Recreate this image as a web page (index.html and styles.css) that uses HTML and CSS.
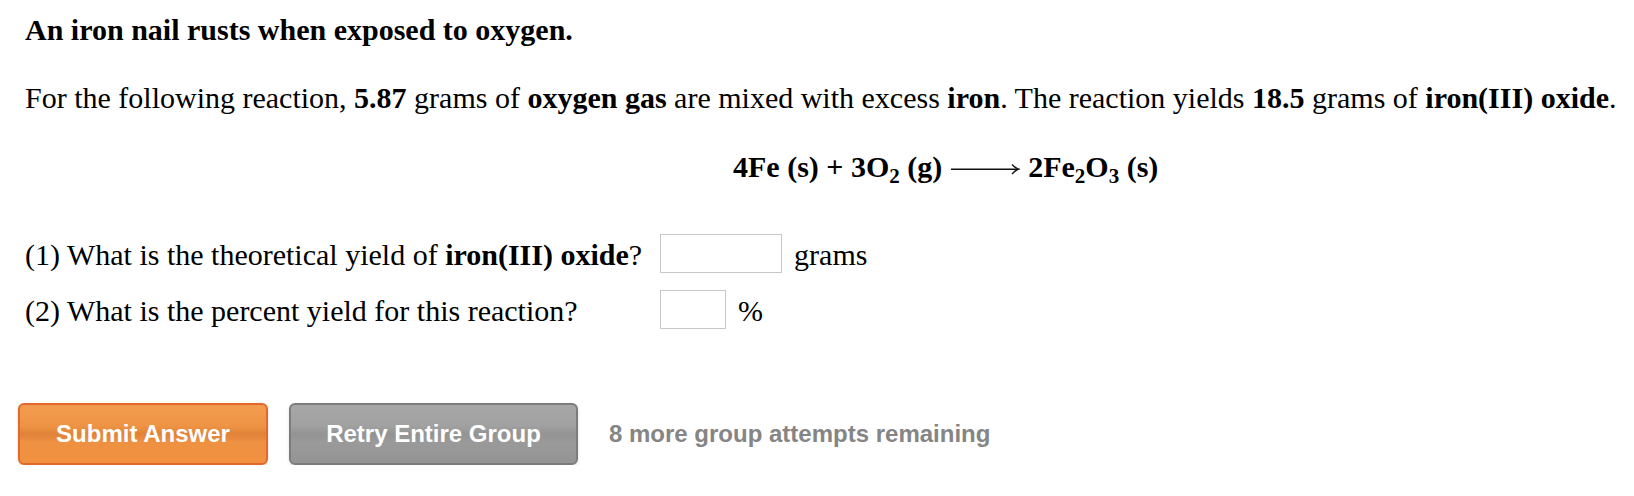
FILE: index.html
```html
<!DOCTYPE html>
<html>
<head>
<meta charset="utf-8">
<link rel="stylesheet" href="styles.css">
</head>
<body>
<div class="page">
  <div class="title">An iron nail rusts when exposed to oxygen.</div>
  <div class="para">For the following reaction, <b>5.87</b> grams of <b>oxygen gas</b> are mixed with excess <b>iron</b>. The reaction yields <b>18.5</b> grams of <b>iron(III) oxide</b>.</div>
  <div class="eq">4Fe (s) + 3O<span class="sub">2</span> (g) <svg class="arrow" width="70" height="20" viewBox="0 0 70 20"><path d="M1 10.2 H68" stroke="#111" stroke-width="1.5" fill="none"/><path d="M62 5.5 Q65 9 69 10.2 Q65 11.4 62 15" stroke="#111" stroke-width="1.3" fill="none"/></svg> 2Fe<span class="sub">2</span>O<span class="sub">3</span> (s)</div>
  <div class="questions">
    <div class="q">(1) What is the theoretical yield of <b>iron(III) oxide</b>?</div>
    <div class="ans"><input class="box wide" type="text"><span class="unit">grams</span></div>
    <div class="q">(2) What is the percent yield for this reaction?</div>
    <div class="ans"><input class="box narrow" type="text"><span class="unit">%</span></div>
  </div>
  <div class="actions">
    <button class="btn submit">Submit Answer</button>
    <button class="btn retry">Retry Entire Group</button>
    <span class="remaining">8 more group attempts remaining</span>
  </div>
</div>
</body>
</html>
```

FILE: styles.css
```css
html, body {
  margin: 0;
  padding: 0;
  background: #fff;
}
.page {
  padding: 13px 0 0 25px;
  font-family: "Liberation Serif", "Times New Roman", serif;
  font-size: 30px;
  color: #000;
}
.title {
  font-weight: bold;
  line-height: 34px;
}
.para {
  margin-top: 34px;
  line-height: 34px;
  white-space: nowrap;
}
.eq {
  margin-top: 35px;
  padding-left: 708px;
  line-height: 34px;
  height: 34px;
  font-weight: bold;
  white-space: nowrap;
}
.sub {
  font-size: 21px;
  line-height: 0;
  vertical-align: -6px;
}
.arrow {
  vertical-align: -2px;
  margin: 0 1px 0 0;
}
.questions {
  margin-top: 50px;
  display: grid;
  grid-template-columns: max-content max-content;
  grid-auto-rows: 39px;
  column-gap: 18px;
  row-gap: 17px;
  align-items: center;
}
.q {
  line-height: 34px;
  padding-top: 3px;
}
.ans {
  display: flex;
  align-items: center;
  gap: 12px;
}
.box {
  box-sizing: border-box;
  height: 39px;
  border: 1px solid #c8c8c8;
  margin: 0;
  padding: 0;
  background: #fff;
}
.wide { width: 122px; }
.narrow { width: 66px; }
.unit {
  line-height: 34px;
  padding-top: 3px;
}
.actions {
  margin-top: 74px;
  margin-left: -7px;
  display: flex;
  align-items: center;
  gap: 21px;
  font-family: "Liberation Sans", Arial, sans-serif;
}
.btn {
  box-sizing: border-box;
  height: 62px;
  padding: 0;
  border-radius: 6px;
  font-family: "Liberation Sans", Arial, sans-serif;
  font-weight: bold;
  font-size: 24px;
  color: #fff;
  white-space: nowrap;
  text-align: center;
  box-shadow: 0 1px 3px rgba(0,0,0,0.15);
}
.submit {
  width: 250px;
  border: 2px solid #e2692b;
  background: linear-gradient(to bottom, #f29b4f 0%, #ef9445 36%, #e08238 50%, #ee9142 64%, #f0913f 100%);
}
.retry {
  width: 289px;
  border: 2px solid #7c7c7c;
  background: linear-gradient(to bottom, #a7a7a7 0%, #a1a1a1 36%, #939393 50%, #9a9a9a 64%, #949494 100%);
}
.remaining {
  margin-left: 10px;
  font-weight: bold;
  font-size: 24px;
  color: #858585;
}
```
